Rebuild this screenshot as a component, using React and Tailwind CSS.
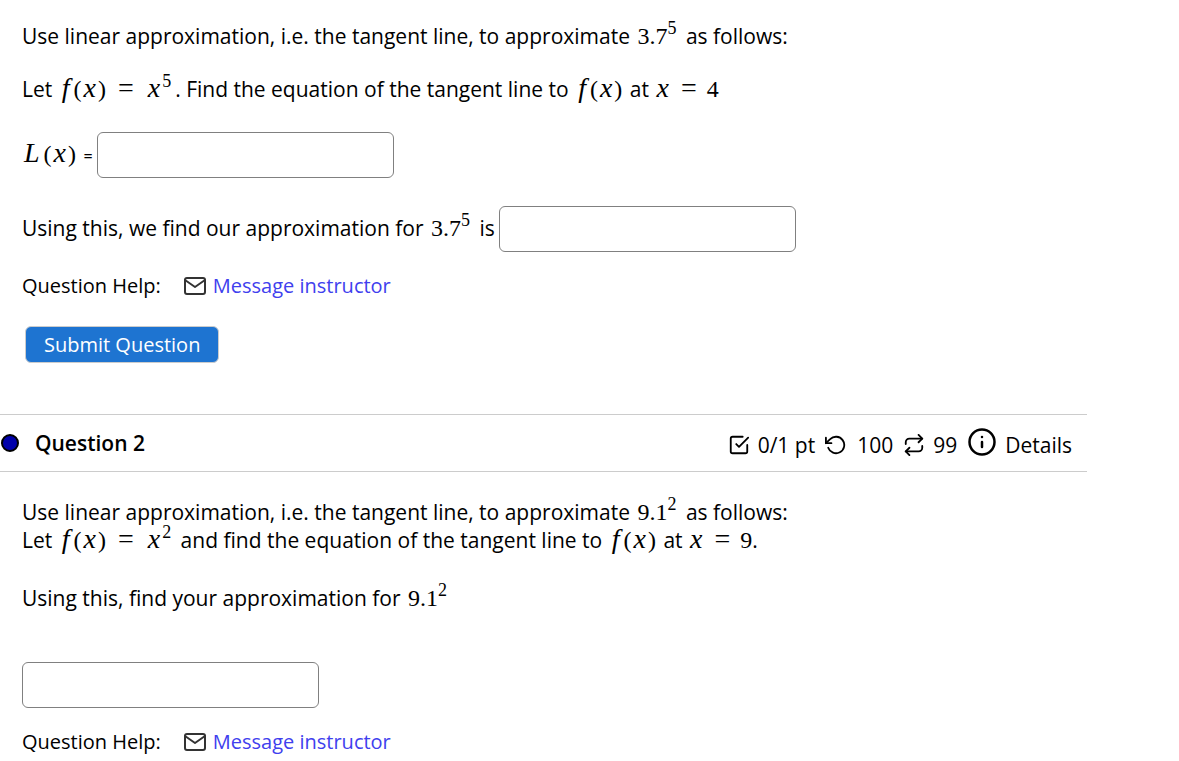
import { useState } from "react";

function Icon({ size = "size-[22px]", children }) {
  return (
    <svg
      className={`${size} shrink-0`}
      viewBox="0 0 24 24"
      fill="none"
      stroke="currentColor"
      strokeWidth="2"
      strokeLinecap="round"
      strokeLinejoin="round"
      aria-hidden="true"
    >
      {children}
    </svg>
  );
}

// upright math text (digits, brackets, signs)
function M({ children }) {
  return <span className="font-['Liberation_Serif',serif] text-2xl leading-[0]">{children}</span>;
}

// math variable
function V({ children }) {
  return <i className="px-0.5 font-['Liberation_Serif',serif] text-[28px] leading-[0]">{children}</i>;
}

function Power({ base, exp }) {
  return (
    <span className="mr-1 ml-0.5 whitespace-nowrap">
      {base}
      <sup className="-top-2.5 font-['Liberation_Serif',serif] text-lg leading-[0]">{exp}</sup>
    </span>
  );
}

function Fn({ name }) {
  return (
    <span className="mx-0.5 whitespace-nowrap">
      <V>{name}</V>
      <span className="pl-0.5">
        <M>(</M>
      </span>
      <V>x</V>
      <M>)</M>
    </span>
  );
}

function Equals() {
  return <span className="px-2.5 font-['Liberation_Serif',serif] text-[28px] leading-[0]">=</span>;
}

function AnswerBox({ id, value, onChange, label }) {
  return (
    <input
      id={id}
      type="text"
      aria-label={label}
      value={value}
      onChange={(e) => onChange(e.target.value)}
      className="h-[46px] w-[297px] rounded-md border border-[#808080] bg-white px-2 outline-none"
    />
  );
}

function QuestionHelp() {
  return (
    <div className="flex h-7 items-center text-xl">
      <span>Question Help:</span>
      <a href="#message" className="ml-[22px] flex items-center gap-1.5 text-[#4040ee]">
        <span className="text-[#333]">
          <Icon size="size-6">
            <path d="M4 4h16c1.1 0 2 .9 2 2v12c0 1.1-.9 2-2 2H4c-1.1 0-2-.9-2-2V6c0-1.1.9-2 2-2z" />
            <polyline points="22,6 12,13 2,6" />
          </Icon>
        </span>
        Message instructor
      </a>
    </div>
  );
}

function QuestionHeader() {
  return (
    <header className="mr-[92px] flex h-[58px] items-center justify-between border-y border-[#ccc] pr-[15px]">
      <div className="flex items-center gap-4">
        <span className="ml-px size-[18px] rounded-full border-2 border-black bg-[#0000aa]" />
        <h2 className="font-semibold">Question 2</h2>
      </div>
      <div className="flex items-center gap-2.5 pt-1">
        <span className="flex items-center gap-2">
          <Icon>
            <polyline points="9 11 12 14 22 4" />
            <path d="M21 12v7a2 2 0 0 1-2 2H5a2 2 0 0 1-2-2V5a2 2 0 0 1 2-2h11" />
          </Icon>
          0/1 pt
        </span>
        <span className="flex items-center gap-2.5">
          <Icon>
            <polyline points="1 4 1 10 7 10" />
            <path d="M3.51 15a9 9 0 1 0 2.13-9.36L1 10" />
          </Icon>
          100
        </span>
        <span className="flex items-center gap-2">
          <Icon>
            <polyline points="17 1 21 5 17 9" />
            <path d="M3 11V9a4 4 0 0 1 4-4h14" />
            <polyline points="7 23 3 19 7 15" />
            <path d="M21 13v2a4 4 0 0 1-4 4H3" />
          </Icon>
          99
        </span>
        <button type="button" className="flex items-center gap-2">
          <span className="pb-1.5">
            <Icon size="size-[30px]">
              <circle cx="12" cy="12" r="10" />
              <line x1="12" y1="16" x2="12" y2="12" />
              <line x1="12" y1="8" x2="12.01" y2="8" />
            </Icon>
          </span>
          Details
        </button>
      </div>
    </header>
  );
}

function App() {
  const [tangent, setTangent] = useState("");
  const [approx, setApprox] = useState("");
  const [approx2, setApprox2] = useState("");

  return (
    <main className="bg-white pt-[22px] font-['Open_Sans',sans-serif] text-[21px] leading-7 text-black">
      {/* question 1 */}
      <section className="pl-[22px]">
        <p className="h-7">
          Use linear approximation, i.e. the tangent line, to approximate{" "}
          <Power base={<M>3.7</M>} exp="5" /> as follows:
        </p>
        <p className="mt-[25px] h-7">
          Let <Fn name="f" />
          <Equals />
          <Power base={<V>x</V>} exp="5" />. Find the equation of the tangent line to{" "}
          <Fn name="f" /> at <V>x</V>
          <Equals />
          <M>4</M>
        </p>
        <div className="mt-[29px] flex items-center gap-1">
          <label htmlFor="tangent" className="-ml-0.5 pb-0.5">
            <Fn name="L" /> <span className="text-base">=</span>
          </label>
          <AnswerBox id="tangent" value={tangent} onChange={setTangent} />
        </div>
        <div className="mt-7 flex items-center gap-1">
          <label htmlFor="approx" className="pb-0.5">
            Using this, we find our approximation for <Power base={<M>3.7</M>} exp="5" /> is
          </label>
          <AnswerBox id="approx" value={approx} onChange={setApprox} />
        </div>
        <div className="mt-5">
          <QuestionHelp />
        </div>
        <button
          type="button"
          className="mt-[26px] ml-[3px] h-[37px] rounded-md border border-[#ccc] bg-[#1e74d1] px-[18px] text-xl leading-none text-white"
        >
          Submit Question
        </button>
      </section>

      <div className="mt-[51px]">
        <QuestionHeader />
      </div>

      {/* question 2 */}
      <section className="pt-[26px] pl-[22px]">
        <p className="h-7">
          Use linear approximation, i.e. the tangent line, to approximate{" "}
          <Power base={<M>9.1</M>} exp="2" /> as follows:
        </p>
        <p className="h-7">
          Let <Fn name="f" />
          <Equals />
          <Power base={<V>x</V>} exp="2" /> and find the equation of the tangent line to{" "}
          <Fn name="f" /> at <V>x</V>
          <Equals />
          <M>9</M>.
        </p>
        <p className="mt-[30px] h-7">
          Using this, find your approximation for <Power base={<M>9.1</M>} exp="2" />
        </p>
        <div className="mt-[50px] flex">
          <AnswerBox id="approx2" value={approx2} onChange={setApprox2} label="Approximation" />
        </div>
        <div className="mt-5">
          <QuestionHelp />
        </div>
      </section>
    </main>
  );
}

export default App;
